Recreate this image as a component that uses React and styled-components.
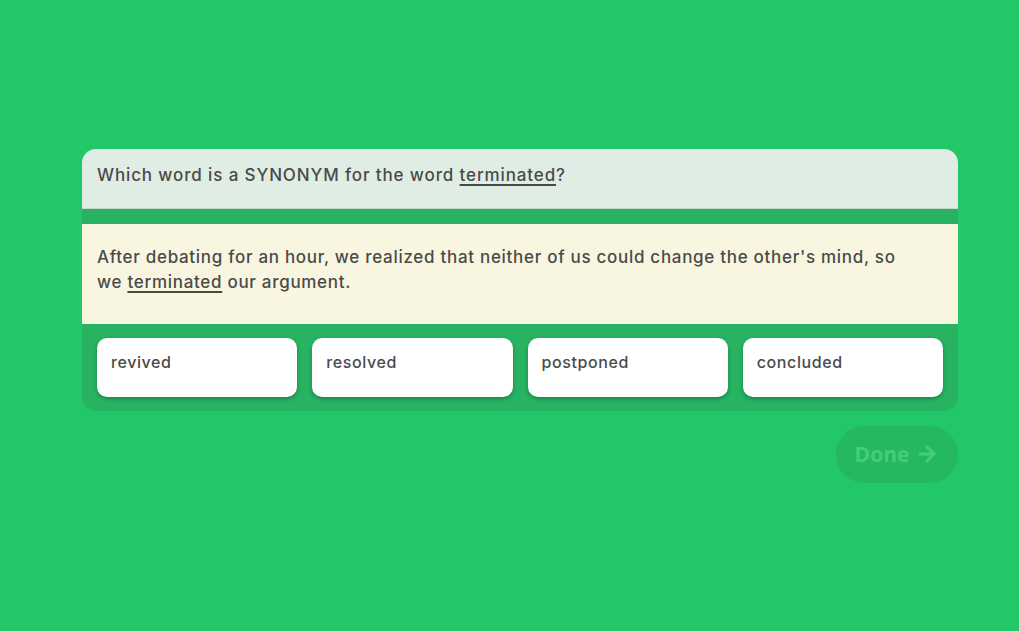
import React from "react";
import styled, { createGlobalStyle } from "styled-components";
import { ArrowRight } from "lucide-react";

const GlobalStyle = createGlobalStyle`
  html, body {
    margin: 0;
    padding: 0;
    background: #22c767;
    font-family: "Inter", "Noto Sans", sans-serif;
  }
`;

const Page = styled.main`
  width: 100%;
  min-height: 631px;
  box-sizing: border-box;
  padding: 149px 61px 0 82px;
  display: flex;
  flex-direction: column;
`;

const Card = styled.section`
  width: 876px;
  border-radius: 14px;
  overflow: hidden;
  background: #28b362;
  display: flex;
  flex-direction: column;
`;

const Question = styled.div`
  height: 60px;
  box-sizing: border-box;
  padding: 14px 15px 0;
  background: #e0ede4;
  border-bottom: 1px solid #c6d6cb;
  color: #4a4a4a;
  font-size: 17px;
  font-weight: 500;
  line-height: 24px;
  letter-spacing: 0.87px;
`;

const Stripe = styled.div`
  height: 15px;
  background: #28b362;
`;

const Passage = styled.div`
  height: 100px;
  box-sizing: border-box;
  padding: 21px 15px 0;
  background: #f8f6e0;
  color: #4a4a4a;
  font-size: 17px;
  font-weight: 500;
  line-height: 25px;
  letter-spacing: 0.7px;
`;

const Word = styled.span`
  text-decoration: underline;
  text-underline-offset: 3px;
  text-decoration-thickness: 1.5px;
`;

const Choices = styled.div`
  display: grid;
  grid-template-columns: repeat(4, 1fr);
  gap: 15px;
  padding: 14px 15px 14px;
`;

const Choice = styled.button`
  height: 59px;
  border: none;
  border-radius: 10px;
  background: #ffffff;
  box-shadow: 0 2px 4px rgba(0, 0, 0, 0.28);
  padding: 13px 14px 0;
  text-align: left;
  align-self: start;
  display: flex;
  align-items: flex-start;
  font-family: "Inter", "Noto Sans", sans-serif;
  font-size: 16px;
  font-weight: 500;
  line-height: 22px;
  letter-spacing: 0.6px;
  color: #4a4a4a;
  cursor: pointer;
`;

const Footer = styled.div`
  width: 876px;
  display: flex;
  justify-content: flex-end;
  margin-top: 15px;
`;

const DoneButton = styled.button`
  height: 57px;
  width: 122px;
  border: none;
  border-radius: 29px;
  background: #25b85f;
  color: #45cd7c;
  font-family: "Open Sans", "Noto Sans", sans-serif;
  font-weight: 700;
  font-size: 21px;
  display: flex;
  align-items: center;
  justify-content: center;
  gap: 6px;
  padding: 0 0 2px;
`;

const choices = ["revived", "resolved", "postponed", "concluded"];

export default function App() {
  return (
    <>
      <GlobalStyle />
      <Page>
        <Card>
          <Question>
            Which word is a SYNONYM for the word <Word>terminated</Word>?
          </Question>
          <Stripe />
          <Passage>
            After debating for an hour, we realized that neither of us could change the other's mind, so
            <br />
            we <Word>terminated</Word> our argument.
          </Passage>
          <Choices>
            {choices.map((c) => (
              <Choice key={c}>{c}</Choice>
            ))}
          </Choices>
        </Card>
        <Footer>
          <DoneButton>
            Done
            <ArrowRight size={24} strokeWidth={3} />
          </DoneButton>
        </Footer>
      </Page>
    </>
  );
}
